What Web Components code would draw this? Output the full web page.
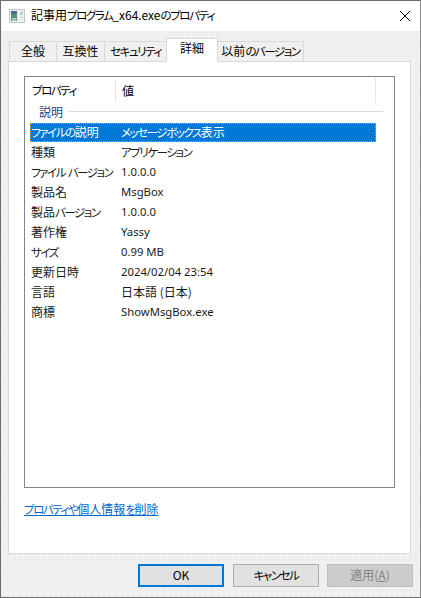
<!DOCTYPE html>
<html lang="ja">
<head>
<meta charset="utf-8">
<title>プロパティ</title>
<style>
  html, body { margin: 0; padding: 0; background: #f0f0f0; }
  body {
    font: 12px/16px "Noto Sans CJK JP", sans-serif;
    font-feature-settings: "palt";
    color: #000;
  }
  .k { font-size: 11.5px; letter-spacing: -1.45px; }
</style>
</head>
<body>
<prop-dialog>
  <title-bar slot="title">記事用プログラム_x64.exeのプロパティ</title-bar>
  <tab-strip slot="tabs">
    <tab-item style="width:48px">全般</tab-item>
    <tab-item style="width:49px">互換性</tab-item>
    <tab-item style="width:63px">セキュリティ</tab-item>
    <tab-item selected style="width:52px">詳細</tab-item>
    <tab-item style="width:87px">以前のバージョン</tab-item>
  </tab-strip>
  <detail-list slot="list">
    <detail-row selected name="ファイルの説明" value="メッセージボックス表示"></detail-row>
    <detail-row name="種類" value="アプリケーション"></detail-row>
    <detail-row name="ファイル バージョン" value="1.0.0.0"></detail-row>
    <detail-row name="製品名" value="MsgBox"></detail-row>
    <detail-row name="製品バージョン" value="1.0.0.0"></detail-row>
    <detail-row name="著作権" value="Yassy"></detail-row>
    <detail-row name="サイズ" value="0.99 MB"></detail-row>
    <detail-row name="更新日時" value="2024/02/04 23:54"></detail-row>
    <detail-row name="言語" value="日本語 (日本)"></detail-row>
    <detail-row name="商標" value="ShowMsgBox.exe"></detail-row>
  </detail-list>
  <a slot="link" href="#">プロパティや個人情報を削除</a>
  <dlg-button slot="buttons" primary>OK</dlg-button>
  <dlg-button slot="buttons" style="margin-right:-1px">キャンセル</dlg-button>
  <dlg-button slot="buttons" disabled>適用(<u>A</u>)</dlg-button>
</prop-dialog>

<script>
// kana are set tighter than kanji, as in the Windows UI font
const KANA = /[\u3040-\u30ff]+/g;
const kana = text => text.replace(KANA, m => `<span class="k">${m}</span>`);

// same thing for the text passed in through slots
document.querySelectorAll('title-bar, tab-item, dlg-button, a').forEach(el => {
  [...el.childNodes].forEach(node => {
    if (node.nodeType !== Node.TEXT_NODE) return;
    const box = document.createElement('span');
    box.innerHTML = kana(node.textContent);
    node.replaceWith(box);
  });
});

const KANA_STYLE = '.k { font-size: 11.5px; letter-spacing: -1.45px; }';

class PropDialog extends HTMLElement {
  connectedCallback() {
    this.attachShadow({ mode: 'open' });
    this.shadowRoot.innerHTML = `
      <style>
        :host {
          display: flex;
          flex-direction: column;
          box-sizing: border-box;
          width: 421px;
          height: 598px;
          border: 1px solid #6e6e6e;
          border-right-color: #8a8a8a;
          background-color: #f0f0f0;
          background-image: radial-gradient(circle at 1px 1px, #e9e9e9 0.7px, transparent 1px);
          background-size: 6px 6px;
        }
        .body {
          flex: 1;
          display: flex;
          flex-direction: column;
          padding: 7px 9px 0 7px;
        }
        .panel {
          box-sizing: border-box;
          height: 493px;
          background: #fff;
          border: 1px solid #d9d9d9;
          padding: 14px 6px 0 15px;
          display: flex;
          flex-direction: column;
        }
        .link {
          margin: 13px 0 0 0;
          line-height: 16px;
        }
        ::slotted(a) {
          color: #0066cc;
          text-decoration: underline;
          font-size: 12px;
        }
        .buttons {
          display: flex;
          justify-content: flex-end;
          gap: 9px;
          margin: 10px -2px 0 0;
        }
      </style>
      <slot name="title"></slot>
      <div class="body">
        <slot name="tabs"></slot>
        <div class="panel">
          <slot name="list"></slot>
          <div class="link"><slot name="link"></slot></div>
        </div>
        <div class="buttons"><slot name="buttons"></slot></div>
      </div>`;
  }
}

class TitleBar extends HTMLElement {
  connectedCallback() {
    this.attachShadow({ mode: 'open' });
    this.shadowRoot.innerHTML = `
      <style>
        :host {
          display: flex;
          align-items: center;
          height: 30px;
          background: #fff;
          font-size: 12px;
          color: #000;
          flex: none;
        }
        svg { flex: none; margin: 0 6px 0 8px; }
        .text { flex: 1; padding-bottom: 2px; }
        .close { margin: 0 10px 0 0; }
      </style>
      <svg width="16" height="15" viewBox="0 0 16 15">
        <rect x="0.5" y="0.5" width="15" height="13" fill="#eef0ef" stroke="#c4c6c6"/>
        <rect x="2" y="2" width="6" height="10" fill="#5b9089"/>
        <rect x="2" y="2" width="6" height="3" fill="#3f6f86"/>
        <rect x="3" y="9" width="4" height="3" fill="#a6c9b4"/>
        <rect x="11" y="3" width="3" height="3" fill="#b5d0da"/>
        <rect x="11" y="8" width="3" height="1" fill="#c9cdcc"/>
      </svg>
      <span class="text"><slot></slot></span>
      <svg class="close" width="10" height="10" viewBox="0 0 10 10">
        <path d="M0 0 L10 10 M10 0 L0 10" stroke="#000" stroke-width="1" fill="none"/>
      </svg>`;
  }
}

class TabStrip extends HTMLElement {
  connectedCallback() {
    this.attachShadow({ mode: 'open' });
    this.shadowRoot.innerHTML = `
      <style>
        :host {
          display: flex;
          align-items: flex-end;
          height: 24px;
          margin-bottom: -1px;
          padding-left: 1px;
          position: relative;
          z-index: 1;
          flex: none;
        }
      </style>
      <slot></slot>`;
  }
}

class TabItem extends HTMLElement {
  connectedCallback() {
    this.attachShadow({ mode: 'open' });
    this.shadowRoot.innerHTML = `
      <style>
        :host {
          display: flex;
          align-items: center;
          justify-content: center;
          box-sizing: border-box;
          height: 21px;
          margin-right: -1px;
          padding-bottom: 2px;
          border: 1px solid #d9d9d9;
          background: #f0f0f0;
          white-space: nowrap;
          font-size: 12px;
        }
        :host([selected]) {
          height: 24px;
          background: #fff;
          border-bottom-color: #fff;
          padding-bottom: 5px;
          position: relative;
          z-index: 1;
        }
      </style>
      <slot></slot>`;
  }
}

class DetailList extends HTMLElement {
  connectedCallback() {
    this.attachShadow({ mode: 'open' });
    this.shadowRoot.innerHTML = `
      <style>
        ${KANA_STYLE}
        :host {
          display: block;
          box-sizing: border-box;
          width: 371px;
          height: 412px;
          flex: none;
          background: #fff;
          border: 1px solid #83838f;
          padding-left: 5px;
        }
        .head {
          display: grid;
          grid-template-columns: 85px 1fr;
          width: 346px;
          height: 25px;
          margin-top: 1px;
          align-items: center;
          border-right: 1px solid #e5e5e5;
          box-sizing: border-box;
        }
        .head span { padding: 0 0 2px 2px; }
        .head span + span {
          padding: 0 0 0 6px;
          border-left: 1px solid #e5e5e5;
          line-height: 23px;
        }
        .head .k { padding: 0; }
        .group {
          display: flex;
          align-items: center;
          gap: 5px;
          height: 20px;
          padding: 0 0 3px 9px;
          width: 353px;
          box-sizing: border-box;
          color: #1b3f7a;
        }
        .group i { flex: 1; height: 1px; background: #d6dde6; }
      </style>
      <div class="head"><span>${kana('プロパティ')}</span><span>値</span></div>
      <div class="group">説明<i></i></div>
      <slot></slot>`;
  }
}

class DetailRow extends HTMLElement {
  connectedCallback() {
    this.attachShadow({ mode: 'open' });
    const value = this.getAttribute('value');
    // plain latin values use a narrower font than the kana/kanji ones
    const latin = /^[\x20-\x7e]+$/.test(value);
    this.shadowRoot.innerHTML = `
      <style>
        ${KANA_STYLE}
        :host {
          display: grid;
          grid-template-columns: 90px 1fr;
          box-sizing: border-box;
          width: 346px;
          height: 20px;
          align-items: center;
          padding: 0 0 2px 1px;
          white-space: nowrap;
          color: #1a1a1a;
        }
        :host([selected]) {
          height: 19px;
          margin-bottom: 1px;
          background: #0078d7;
          color: #fff;
          outline: 1px dotted #f0a030;
          outline-offset: -1px;
        }
        .latin { font-family: "Noto Sans", sans-serif; font-size: 11.3px; }
      </style>
      <span>${kana(this.getAttribute('name'))}</span>
      <span class="${latin ? 'latin' : ''}">${kana(value)}</span>`;
  }
}

class DlgButton extends HTMLElement {
  connectedCallback() {
    this.attachShadow({ mode: 'open' });
    this.shadowRoot.innerHTML = `
      <style>
        :host {
          display: flex;
          align-items: center;
          justify-content: center;
          box-sizing: border-box;
          width: 86px;
          height: 23px;
          padding-bottom: 2px;
          background: #e1e1e1;
          border: 1px solid #adadad;
          font-size: 12px;
        }
        :host([primary]) { border: 2px solid #0078d7; }
        :host([disabled]) {
          background: #cccccc;
          border-color: #bfbfbf;
          color: #838383;
        }
      </style>
      <slot></slot>`;
  }
}

customElements.define('prop-dialog', PropDialog);
customElements.define('title-bar', TitleBar);
customElements.define('tab-strip', TabStrip);
customElements.define('tab-item', TabItem);
customElements.define('detail-list', DetailList);
customElements.define('detail-row', DetailRow);
customElements.define('dlg-button', DlgButton);
</script>
</body>
</html>
